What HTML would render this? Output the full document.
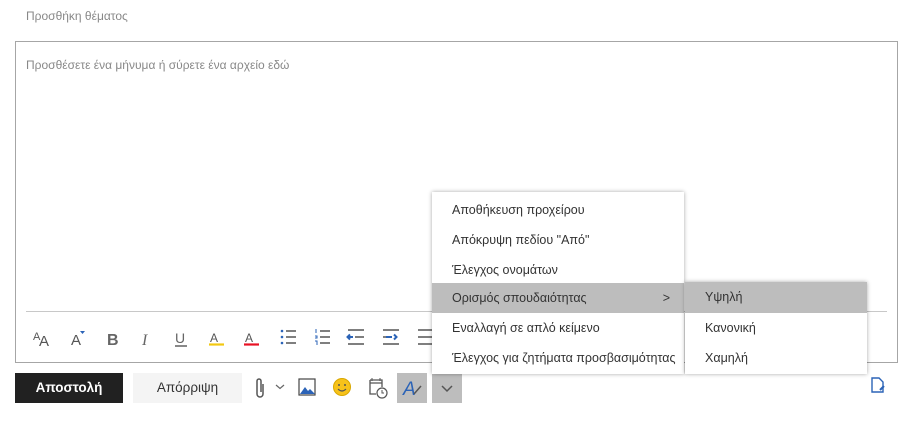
<!DOCTYPE html>
<html><head><meta charset="utf-8"><style>
body{margin:0;width:918px;height:425px;background:#fff;font-family:"Segoe UI","Liberation Sans","DejaVu Sans",sans-serif;position:relative;overflow:hidden;color:#333}
.a{position:absolute}
.ph{color:#888;font-size:12px}
.menu{background:#fff;box-shadow:0 0 4px rgba(0,0,0,.35);font-size:12.5px;color:#333}
.it{position:absolute;left:0;right:0;height:30px;line-height:30px;padding-left:20px}
.hl{background:#bdbdbd}
</style></head><body>
<div class="a ph" style="left:26px;top:9px">Προσθήκη θέματος</div>
<div class="a" style="left:15px;top:41px;width:881px;height:320px;border:1px solid #a6a6a6"></div>
<div class="a ph" style="left:26px;top:58px">Προσθέσετε ένα μήνυμα ή σύρετε ένα αρχείο εδώ</div>
<div class="a" style="left:26px;top:311px;width:861px;height:1px;background:#c8c8c8"></div>
<svg class="a" style="left:30px;top:325px" width="420" height="26" viewBox="0 0 420 26" fill="none" stroke="#555" stroke-width="1.4">
<text x="3" y="15" font-size="11" fill="#555" stroke="none" font-family="Liberation Sans">A</text><text x="9" y="21" font-size="15" fill="#555" stroke="none" font-family="Liberation Sans">A</text>
<text x="41" y="20" font-size="15" fill="#555" stroke="none" font-family="Liberation Sans">A</text><path d="M50 6h5l-2.5 3z" fill="#2b63b7" stroke="none"/>
<text x="77" y="20" font-size="16" font-weight="bold" fill="#666" stroke="none" font-family="Liberation Sans">B</text>
<text x="112" y="20" font-size="16" font-style="italic" fill="#666" stroke="none" font-family="Liberation Serif">I</text>
<text x="145" y="18" font-size="14" fill="#666" stroke="none" font-family="Liberation Sans">U</text><path d="M145 21h12"/>
<text x="180" y="17" font-size="12" fill="#555" stroke="none" font-family="Liberation Sans">A</text><path d="M179 19.5h15" stroke="#f2c811" stroke-width="2.2"/>
<text x="215" y="17" font-size="12" fill="#555" stroke="none" font-family="Liberation Sans">A</text><path d="M214 19.5h15" stroke="#e81123" stroke-width="2.2"/>
<g fill="#2b63b7" stroke="none"><circle cx="252" cy="6" r="1.3"/><circle cx="252" cy="12" r="1.3"/><circle cx="252" cy="18" r="1.3"/></g><path d="M256 6h10M256 12h10M256 18h10"/>
<path d="M290 6h10M290 12h10M290 18h10"/><path d="M286 4v4M285 11h2v2h-2M285 16h2v4" stroke="#2b63b7" stroke-width="1"/>
<path d="M318 5h16M325 12h9M318 19h16"/><path d="M323 12h-5M320 9.5l-2.5 2.5 2.5 2.5" stroke="#2b63b7" stroke-width="2"/>
<path d="M353 5h16M353 12h8M353 19h16"/><path d="M356 12h6M364 9.5l2.5 2.5-2.5 2.5" stroke="#2b63b7" stroke-width="2"/>
<path d="M388 5h14M388 12h14M388 19h14"/>
</svg>
<div class="a" style="left:15px;top:373px;width:108px;height:30px;background:#212121;color:#fff;font-weight:bold;font-size:13.5px;line-height:30px;text-align:center">Αποστολή</div>
<div class="a" style="left:133px;top:373px;width:109px;height:30px;background:#f4f4f4;color:#333;font-size:13.5px;line-height:30px;text-align:center">Απόρριψη</div>
<svg class="a" style="left:250px;top:373px" width="220" height="30" viewBox="0 0 220 30" fill="none">
<path d="M13 11v10a3 3 0 0 1-6 0V8a2 2 0 0 1 4 0v11" stroke="#555" stroke-width="1.5"/>
<path d="M26 12l4 3.5 4-3.5" stroke="#666" stroke-width="1.2"/>
<rect x="49" y="6" width="16" height="16" stroke="#444" stroke-width="1.2"/><path d="M50 21l5-7 3 4 2-2 5 5z" fill="#2b63b7"/>
<circle cx="92" cy="14" r="8.5" fill="#f7c21a" stroke="#d9a800"/><circle cx="89" cy="12" r="1" fill="#555"/><circle cx="95" cy="12" r="1" fill="#555"/><path d="M88 16q4 4 8 0" stroke="#555" stroke-width="1.2"/>
<path d="M120 7h12v7M120 7v14h6M120 10h12" stroke="#555" stroke-width="1.3"/><path d="M122 5v3M130 5v3" stroke="#555"/><circle cx="132" cy="20" r="5" fill="#fff" stroke="#555" stroke-width="1.2"/><path d="M132 17v3h2" stroke="#555"/>
<rect x="147" y="0" width="30" height="30" fill="#bdbdbd"/>
<text x="153" y="22" font-size="19" font-style="italic" fill="#2b63b7" font-family="Liberation Sans">A</text><path d="M164 21l7-8" stroke="#555" stroke-width="1.5"/>
<rect x="182" y="0" width="30" height="30" fill="#bdbdbd"/><path d="M192 13l5 5 5-5" stroke="#555" stroke-width="1.5"/>
</svg>
<svg class="a" style="left:870px;top:376px" width="16" height="20" viewBox="0 0 16 20" fill="none"><path d="M2 2h7l4 4v10H2z" stroke="#2b63b7" stroke-width="1.4"/><path d="M10 14l4-4" stroke="#2b63b7" stroke-width="2"/></svg>
<div class="a menu" style="left:432px;top:192px;width:252px;height:182px">
<div class="it" style="top:3px">Αποθήκευση προχείρου</div>
<div class="it" style="top:33px">Απόκρυψη πεδίου "Από"</div>
<div class="it" style="top:63px">Έλεγχος ονομάτων</div>
<div class="it hl" style="top:91px">Ορισμός σπουδαιότητας<span style="position:absolute;right:14px">&gt;</span></div>
<div class="it" style="top:121px">Εναλλαγή σε απλό κείμενο</div>
<div class="it" style="top:151px">Έλεγχος για ζητήματα προσβασιμότητας</div>
</div>
<div class="a menu" style="left:685px;top:282px;width:182px;height:92px">
<div class="it hl" style="top:0;height:31px;line-height:31px">Υψηλή</div>
<div class="it" style="top:31px">Κανονική</div>
<div class="it" style="top:61px">Χαμηλή</div>
</div>
</body></html>
